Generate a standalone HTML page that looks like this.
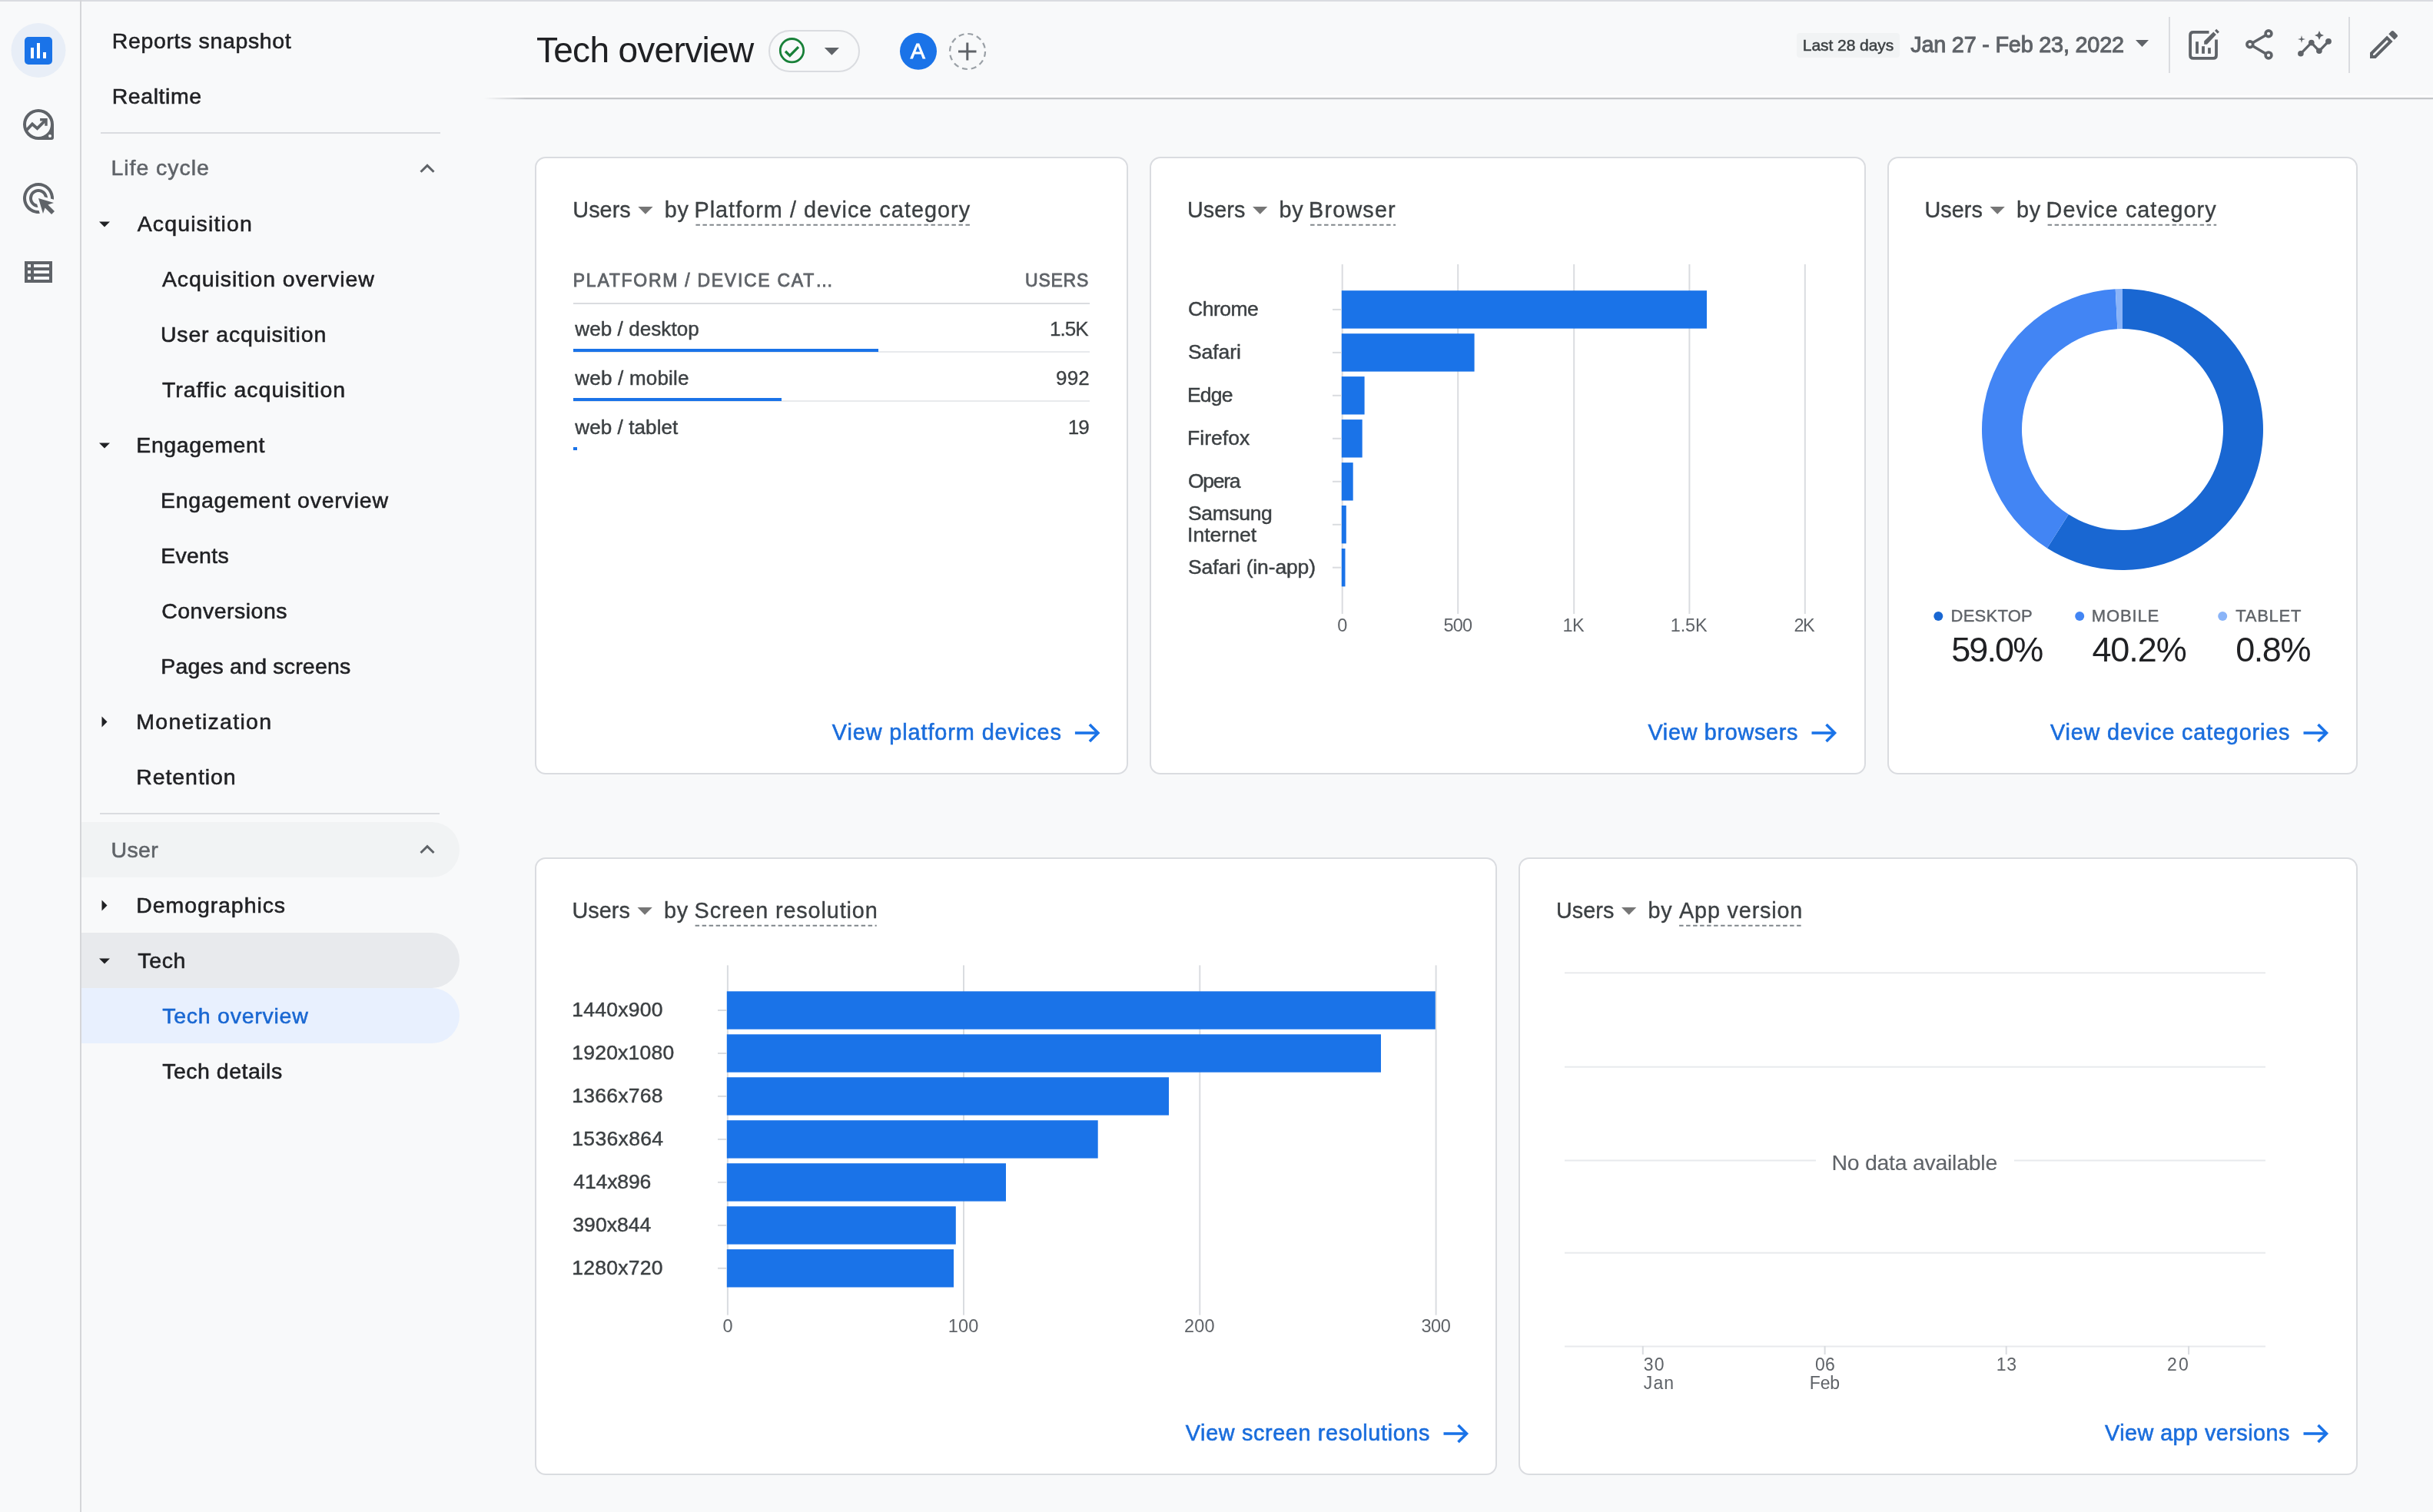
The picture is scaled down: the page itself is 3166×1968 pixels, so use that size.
<!DOCTYPE html>
<html><head><meta charset="utf-8"><style>
html,body{margin:0;padding:0;}
body{width:3166px;height:1968px;background:#f8f9fa;position:relative;overflow:hidden;font-family:"Liberation Sans", sans-serif;}
.t{position:absolute;white-space:nowrap;}
.tl{position:absolute;left:0;top:0;width:3166px;height:1968px;will-change:transform;}
svg.ov{position:absolute;left:0;top:0;}
</style></head><body>
<div style="position:absolute;left:0px;top:0px;width:3166px;height:2px;background:#dadce0"></div>
<div style="position:absolute;left:104px;top:0px;width:2px;height:1968px;background:#d5d6d9"></div>
<div style="position:absolute;left:630px;top:124px;width:2536px;height:3px;background:linear-gradient(90deg, rgba(255,255,255,0) 0px, rgba(255,255,255,1) 55px)"></div>
<div style="position:absolute;left:630px;top:127px;width:2536px;height:2px;background:linear-gradient(90deg, rgba(196,198,201,0) 0px, rgba(196,198,201,1) 55px)"></div>
<div style="position:absolute;left:630px;top:129px;width:2536px;height:1px;background:linear-gradient(90deg, rgba(232,234,237,0) 0px, rgba(232,234,237,1) 55px)"></div>
<div style="position:absolute;left:106px;top:1070px;width:492px;height:72px;background:#f1f3f4;border-radius:0 36px 36px 0"></div>
<div style="position:absolute;left:106px;top:1214px;width:492px;height:72px;background:#e8eaed;border-radius:0 36px 36px 0"></div>
<div style="position:absolute;left:106px;top:1286px;width:492px;height:72px;background:#e8f0fe;border-radius:0 36px 36px 0"></div>
<div style="position:absolute;left:131px;top:172px;width:442px;height:2px;background:#dadce0"></div>
<div style="position:absolute;left:130px;top:1058px;width:442px;height:2px;background:#dadce0"></div>
<div style="position:absolute;left:1000px;top:39px;width:118.5px;height:54.5px;border:2px solid #dadce0;border-radius:28px;box-sizing:border-box"></div>
<div style="position:absolute;left:2338px;top:43.4px;width:134px;height:32px;background:#f1f3f4;border-radius:4px"></div>
<div style="position:absolute;left:2822px;top:22px;width:2px;height:73px;background:#dadce0"></div>
<div style="position:absolute;left:3056px;top:22px;width:2px;height:73px;background:#dadce0"></div>
<div style="position:absolute;left:696px;top:204px;width:772px;height:804px;background:#fff;border:2px solid #dadce0;border-radius:14px;box-sizing:border-box"></div>
<div style="position:absolute;left:1496px;top:204px;width:932px;height:804px;background:#fff;border:2px solid #dadce0;border-radius:14px;box-sizing:border-box"></div>
<div style="position:absolute;left:2456px;top:204px;width:612px;height:804px;background:#fff;border:2px solid #dadce0;border-radius:14px;box-sizing:border-box"></div>
<div style="position:absolute;left:696px;top:1116px;width:1252px;height:804px;background:#fff;border:2px solid #dadce0;border-radius:14px;box-sizing:border-box"></div>
<div style="position:absolute;left:1976px;top:1116px;width:1092px;height:804px;background:#fff;border:2px solid #dadce0;border-radius:14px;box-sizing:border-box"></div>
<svg class="ov" width="3166" height="1968" viewBox="0 0 3166 1968">
<circle cx="50" cy="65.5" r="35.5" fill="#e8eef7"/>
<rect x="32" y="48" width="36" height="36" fill="#1a73e8" rx="5"/>
<rect x="40" y="62" width="4" height="14" fill="#fff"/>
<rect x="48" y="56" width="4" height="20" fill="#fff"/>
<rect x="56" y="68" width="4" height="8" fill="#fff"/>
<path fill="#5f6368" fill-rule="evenodd" d="M50 142 A20 20 0 0 0 30 162 A20 20 0 0 0 50 182 H67 Q70 182 70 179 V162 A20 20 0 0 0 50 142 Z M50 146 A16 16 0 1 1 50 178 A16 16 0 1 1 50 146 Z"/>
<circle cx="65" cy="177" r="2" fill="#f8f9fa"/>
<g fill="none" stroke="#5f6368" stroke-width="3.8" stroke-linejoin="miter" stroke-miterlimit="10"><polyline points="33.5,170.5 42,161.5 48.5,167.2 59.5,156.2"/></g>
<path d="M52.1 155.8 H60 V163.7" fill="none" stroke="#5f6368" stroke-width="3.4" stroke-linejoin="miter"/>
<g transform="translate(26,234) scale(2)" fill="#5f6368"><path d="M11.71,17.99C8.53,17.84,6,15.22,6,12c0-3.31,2.690-6,6-6c3.22,0,5.84,2.53,5.99,5.71l-2.1-0.63C15.48,9.31,13.89,8,12,8 c-2.21,0-4,1.79-4,4c0,1.89,1.31,3.48,3.08,3.89L11.71,17.99z M22,12c0,0.3-0.01,0.6-0.04,0.9l-1.97-0.59C20,12.21,20,12.1,20,12 c0-4.42-3.58-8-8-8s-8,3.58-8,8s3.58,8,8,8c0.1,0,0.21,0,0.31-0.01l0.59,1.97C12.6,21.990,12.3,22,12,22C6.48,22,2,17.52,2,12 C2,6.48,6.48,2,12,2S22,6.48,22,12z M18.23,16.26L22,15l-10-3l3,10l1.26-3.77l4.27,4.27l1.97-1.97L18.23,16.26z"/></g>
<path fill="#5f6368" fill-rule="evenodd" d="M32 340 H68 V368 H32 Z M36 344 h4 v4 h-4 Z M44 344 h20 v4 h-20 Z M36 352 h4 v4 h-4 Z M44 352 h20 v4 h-20 Z M36 360 h4 v4 h-4 Z M44 360 h20 v4 h-20 Z"/>
<path d="M129 288.5 H143 L136 295.5 Z" fill="#202124"/>
<path d="M129 576.5 H143 L136 583.5 Z" fill="#202124"/>
<path d="M129 1247.5 H143 L136 1254.5 Z" fill="#202124"/>
<path d="M132.5 932.5 V946.5 L139.5 939.5 Z" fill="#202124"/>
<path d="M132.5 1171.5 V1185.5 L139.5 1178.5 Z" fill="#202124"/>
<path d="M547.5 223.8 L556 215.4 L564.5 223.8" fill="none" stroke="#5f6368" stroke-width="3"/>
<path d="M547.5 1110.0 L556 1101.6 L564.5 1110.0" fill="none" stroke="#5f6368" stroke-width="3"/>
<circle cx="1030.5" cy="65.7" r="15.2" fill="none" stroke="#188038" stroke-width="2.8"/>
<polyline points="1022,66.8 1027.8,72.4 1039,61.2" fill="none" stroke="#188038" stroke-width="3.3"/>
<path d="M1072.8 61.9 H1092 L1082.4 71.8 Z" fill="#5f6368"/>
<circle cx="1195" cy="66.8" r="24" fill="#1a73e8"/>
<circle cx="1259" cy="67" r="23" fill="none" stroke="#9aa0a6" stroke-width="2.2" stroke-dasharray="7 5"/>
<path d="M1247 67 H1270.5 M1258.8 55.5 V78.5" stroke="#5f6368" stroke-width="3"/>
<path d="M2779 52.1 H2796 L2787.5 61 Z" fill="#5f6368"/>
<path d="M2874.5 41.9 H2854 Q2850.1 41.9 2850.1 45.8 V71.9 Q2850.1 75.8 2854 75.8 H2880.1 Q2884 75.8 2884 71.9 V51.5" fill="none" stroke="#5f6368" stroke-width="3.8"/>
<rect x="2857.1" y="54.2" width="3.8" height="15.6" fill="#5f6368"/>
<rect x="2865.1" y="60.2" width="3.8" height="9.6" fill="#5f6368"/>
<rect x="2873.1" y="62.2" width="3.7" height="7.6" fill="#5f6368"/>
<path d="M2868.2 53.4 L2880.3 41.5 L2883.9 45.0 L2871.9 57.7 H2868.2 Z" fill="#5f6368"/>
<path d="M2882.0 40.0 L2884.2 37.8 L2887.9 41.5 L2885.7 43.7 Z" fill="#5f6368"/>
<g stroke="#5f6368" stroke-width="3.5"><line x1="2927.8" y1="57.8" x2="2952" y2="43.8"/><line x1="2927.8" y1="57.8" x2="2952" y2="71.9"/></g>
<g fill="#f8f9fa" stroke="#5f6368" stroke-width="3.65"><circle cx="2927.8" cy="57.8" r="3.9"/><circle cx="2952" cy="43.8" r="3.9"/><circle cx="2952" cy="71.9" r="3.9"/></g>
<g stroke="#5f6368" stroke-width="3.3" fill="none"><polyline points="2993.9,69.8 3007.8,55.6 3017.9,66.3 3030,53.8"/></g><g fill="#5f6368"><circle cx="2993.9" cy="69.8" r="3.8"/><circle cx="3007.8" cy="55.6" r="3.8"/><circle cx="3017.9" cy="66.3" r="3.8"/><circle cx="3030" cy="53.8" r="3.9"/></g>
<g transform="translate(2988,34) scale(2)" fill="#5f6368"><path d="M15 9l.94-2.07L18 6l-2.06-.93L15 3l-.92 2.07L12 6l2.08.93z"/><path d="M3.5 11L4 9l2-.5L4 8l-.5-2L3 8l-2 .5L3 9z"/></g>
<g transform="translate(3078,34) scale(2)" fill="#5f6368"><path d="M3 17.25V21h3.75L17.81 9.94l-3.75-3.75L3 17.25zM5.92 19H5v-.92l9.06-9.06.92.92L5.920 19zM20.71 5.63l-2.34-2.34c-.2-.2-.45-.29-.71-.29s-.51.1-.7.29l-1.83 1.83 3.75 3.75 1.83-1.83c.39-.39.39-1.02 0-1.41z"/></g>
<path d="M830.3 269.0 H849.6 L839.9 278.8 Z" fill="#767676"/>
<line x1="905.4" y1="292.8" x2="1262.7" y2="292.8" stroke="#80868b" stroke-width="2" stroke-dasharray="5.5 3.5"/>
<rect x="746" y="394" width="672" height="2" fill="#dadce0"/>
<rect x="746" y="457" width="672" height="2" fill="#e8eaed"/>
<rect x="746" y="454" width="397" height="4" fill="#1a73e8"/>
<rect x="746" y="521" width="672" height="2" fill="#e8eaed"/>
<rect x="746" y="518" width="271" height="4" fill="#1a73e8"/>
<rect x="746" y="582" width="5" height="4" fill="#1a73e8"/>
<g fill="none" stroke="#1a73e8" stroke-width="3.6"><path d="M1398.9 954 H1428.9"/><path d="M1417.9 943 L1428.9 954 L1417.9 965"/></g>
<path d="M1630.0 269.0 H1649.3 L1639.7 278.8 Z" fill="#767676"/>
<line x1="1705.1" y1="292.8" x2="1816.1" y2="292.8" stroke="#80868b" stroke-width="2" stroke-dasharray="5.5 3.5"/>
<rect x="1745.7" y="344" width="2" height="455" fill="#dadce0"/>
<rect x="1896.2" y="344" width="2" height="455" fill="#dadce0"/>
<rect x="2047.2" y="344" width="2" height="455" fill="#dadce0"/>
<rect x="2197.4" y="344" width="2" height="455" fill="#dadce0"/>
<rect x="2347.8" y="344" width="2" height="455" fill="#dadce0"/>
<rect x="1745.8" y="378.2" width="475.2" height="49.4" fill="#1a73e8"/>
<rect x="1734" y="401.9" width="12" height="2" fill="#dadce0"/>
<rect x="1745.8" y="434.2" width="172.8" height="49.4" fill="#1a73e8"/>
<rect x="1734" y="457.9" width="12" height="2" fill="#dadce0"/>
<rect x="1745.8" y="490.1" width="29.8" height="49.4" fill="#1a73e8"/>
<rect x="1734" y="513.8" width="12" height="2" fill="#dadce0"/>
<rect x="1745.8" y="546.1" width="26.9" height="49.4" fill="#1a73e8"/>
<rect x="1734" y="569.8" width="12" height="2" fill="#dadce0"/>
<rect x="1745.8" y="602.1" width="14.9" height="49.4" fill="#1a73e8"/>
<rect x="1734" y="625.8" width="12" height="2" fill="#dadce0"/>
<rect x="1745.8" y="658.0" width="6.0" height="49.4" fill="#1a73e8"/>
<rect x="1734" y="681.8" width="12" height="2" fill="#dadce0"/>
<rect x="1745.8" y="714.0" width="4.7" height="49.4" fill="#1a73e8"/>
<rect x="1734" y="737.7" width="12" height="2" fill="#dadce0"/>
<g fill="none" stroke="#1a73e8" stroke-width="3.6"><path d="M2357.5 954 H2387.5"/><path d="M2376.5 943 L2387.5 954 L2376.5 965"/></g>
<path d="M2589.5 269.0 H2608.8 L2599.2 278.8 Z" fill="#767676"/>
<line x1="2664.6" y1="292.8" x2="2884.2" y2="292.8" stroke="#80868b" stroke-width="2" stroke-dasharray="5.5 3.5"/>
<path d="M2762.00 376.00 A183 183 0 1 1 2663.94 713.51 L2691.81 669.61 A131 131 0 1 0 2762.00 428.00 Z" fill="#1967d2"/>
<path d="M2663.94 713.51 A183 183 0 0 1 2752.74 376.23 L2755.37 428.17 A131 131 0 0 0 2691.81 669.61 Z" fill="#4285f4"/>
<path d="M2752.74 376.23 A183 183 0 0 1 2762.00 376.00 L2762.00 428.00 A131 131 0 0 0 2755.37 428.17 Z" fill="#8ab4f8"/>
<circle cx="2522.3" cy="802.1" r="6" fill="#1967d2"/>
<circle cx="2706.2" cy="802.1" r="6" fill="#4285f4"/>
<circle cx="2892.2" cy="802.1" r="6" fill="#8ab4f8"/>
<g fill="none" stroke="#1a73e8" stroke-width="3.6"><path d="M2997.5 954 H3027.5"/><path d="M3016.5 943 L3027.5 954 L3016.5 965"/></g>
<path d="M829.5 1181.0 H848.8 L839.1 1190.8 Z" fill="#767676"/>
<line x1="904.6" y1="1204.8" x2="1140.7" y2="1204.8" stroke="#80868b" stroke-width="2" stroke-dasharray="5.5 3.5"/>
<rect x="945.9" y="1256.4" width="2" height="455.3" fill="#dadce0"/>
<rect x="1253.0" y="1256.4" width="2" height="455.3" fill="#dadce0"/>
<rect x="1560.3" y="1256.4" width="2" height="455.3" fill="#dadce0"/>
<rect x="1867.6" y="1256.4" width="2" height="455.3" fill="#dadce0"/>
<rect x="945.8" y="1290.3" width="922.0" height="49.4" fill="#1a73e8"/>
<rect x="934" y="1314.0" width="12" height="2" fill="#dadce0"/>
<rect x="945.8" y="1346.3" width="851.2" height="49.4" fill="#1a73e8"/>
<rect x="934" y="1370.0" width="12" height="2" fill="#dadce0"/>
<rect x="945.8" y="1402.2" width="575.2" height="49.4" fill="#1a73e8"/>
<rect x="934" y="1425.9" width="12" height="2" fill="#dadce0"/>
<rect x="945.8" y="1458.2" width="482.9" height="49.4" fill="#1a73e8"/>
<rect x="934" y="1481.9" width="12" height="2" fill="#dadce0"/>
<rect x="945.8" y="1514.2" width="363.2" height="49.4" fill="#1a73e8"/>
<rect x="934" y="1537.9" width="12" height="2" fill="#dadce0"/>
<rect x="945.8" y="1570.2" width="298.0" height="49.4" fill="#1a73e8"/>
<rect x="934" y="1593.9" width="12" height="2" fill="#dadce0"/>
<rect x="945.8" y="1626.1" width="295.2" height="49.4" fill="#1a73e8"/>
<rect x="934" y="1649.8" width="12" height="2" fill="#dadce0"/>
<g fill="none" stroke="#1a73e8" stroke-width="3.6"><path d="M1878.5 1866 H1908.5"/><path d="M1897.5 1855 L1908.5 1866 L1897.5 1877"/></g>
<path d="M2110.0 1181.0 H2129.3 L2119.7 1190.8 Z" fill="#767676"/>
<line x1="2185.1" y1="1204.8" x2="2344.3" y2="1204.8" stroke="#80868b" stroke-width="2" stroke-dasharray="5.5 3.5"/>
<rect x="2036" y="1265.3" width="912" height="2" fill="#e8eaed"/>
<rect x="2036" y="1387.7" width="912" height="2" fill="#e8eaed"/>
<rect x="2036" y="1509.5" width="912" height="2" fill="#e8eaed"/>
<rect x="2036" y="1629.7" width="912" height="2" fill="#e8eaed"/>
<rect x="2036" y="1751.5" width="912" height="2" fill="#e8eaed"/>
<rect x="2363" y="1490" width="258" height="40" fill="#fff"/>
<rect x="2136.8" y="1752" width="2" height="11" fill="#dadce0"/>
<rect x="2373.6" y="1752" width="2" height="11" fill="#dadce0"/>
<rect x="2609.7" y="1752" width="2" height="11" fill="#dadce0"/>
<rect x="2847.1" y="1752" width="2" height="11" fill="#dadce0"/>
<g fill="none" stroke="#1a73e8" stroke-width="3.6"><path d="M2997.5 1866 H3027.5"/><path d="M3016.5 1855 L3027.5 1866 L3016.5 1877"/></g>
</svg>
<div class="tl">
<div class="t" style="left:145.70px;top:31.50px;font-size:28.5px;line-height:43px;color:#202124;letter-spacing:0.643px;-webkit-text-stroke:0.55px #202124;">Reports snapshot</div>
<div class="t" style="left:145.70px;top:103.90px;font-size:28.5px;line-height:43px;color:#202124;letter-spacing:0.571px;-webkit-text-stroke:0.55px #202124;">Realtime</div>
<div class="t" style="left:144.50px;top:197.00px;font-size:28.5px;line-height:43px;color:#5f6368;letter-spacing:0.939px;-webkit-text-stroke:0.55px #5f6368;">Life cycle</div>
<div class="t" style="left:178.70px;top:269.50px;font-size:28.5px;line-height:43px;color:#202124;letter-spacing:1.123px;-webkit-text-stroke:0.55px #202124;">Acquisition</div>
<div class="t" style="left:210.90px;top:341.50px;font-size:28.5px;line-height:43px;color:#202124;letter-spacing:0.936px;-webkit-text-stroke:0.55px #202124;">Acquisition overview</div>
<div class="t" style="left:208.90px;top:413.50px;font-size:28.5px;line-height:43px;color:#202124;letter-spacing:0.846px;-webkit-text-stroke:0.55px #202124;">User acquisition</div>
<div class="t" style="left:210.90px;top:485.50px;font-size:28.5px;line-height:43px;color:#202124;letter-spacing:1.004px;-webkit-text-stroke:0.55px #202124;">Traffic acquisition</div>
<div class="t" style="left:177.30px;top:557.50px;font-size:28.5px;line-height:43px;color:#202124;letter-spacing:0.600px;-webkit-text-stroke:0.55px #202124;">Engagement</div>
<div class="t" style="left:208.90px;top:629.50px;font-size:28.5px;line-height:43px;color:#202124;letter-spacing:0.783px;-webkit-text-stroke:0.55px #202124;">Engagement overview</div>
<div class="t" style="left:209.20px;top:701.50px;font-size:28.5px;line-height:43px;color:#202124;letter-spacing:0.264px;-webkit-text-stroke:0.55px #202124;">Events</div>
<div class="t" style="left:210.20px;top:773.50px;font-size:28.5px;line-height:43px;color:#202124;letter-spacing:0.494px;-webkit-text-stroke:0.55px #202124;">Conversions</div>
<div class="t" style="left:209.20px;top:845.50px;font-size:28.5px;line-height:43px;color:#202124;letter-spacing:0.191px;-webkit-text-stroke:0.55px #202124;">Pages and screens</div>
<div class="t" style="left:177.30px;top:917.50px;font-size:28.5px;line-height:43px;color:#202124;letter-spacing:1.287px;-webkit-text-stroke:0.55px #202124;">Monetization</div>
<div class="t" style="left:177.30px;top:989.50px;font-size:28.5px;line-height:43px;color:#202124;letter-spacing:0.906px;-webkit-text-stroke:0.55px #202124;">Retention</div>
<div class="t" style="left:144.50px;top:1084.50px;font-size:28.5px;line-height:43px;color:#5f6368;letter-spacing:0.373px;-webkit-text-stroke:0.55px #5f6368;">User</div>
<div class="t" style="left:177.30px;top:1156.50px;font-size:28.5px;line-height:43px;color:#202124;letter-spacing:0.909px;-webkit-text-stroke:0.55px #202124;">Demographics</div>
<div class="t" style="left:179.30px;top:1228.50px;font-size:28.5px;line-height:43px;color:#202124;letter-spacing:0.650px;-webkit-text-stroke:0.55px #202124;">Tech</div>
<div class="t" style="left:211.20px;top:1300.50px;font-size:28.5px;line-height:43px;color:#1967d2;letter-spacing:0.751px;-webkit-text-stroke:0.55px #1967d2;">Tech overview</div>
<div class="t" style="left:211.20px;top:1372.50px;font-size:28.5px;line-height:43px;color:#202124;letter-spacing:0.495px;-webkit-text-stroke:0.55px #202124;">Tech details</div>
<div class="t" style="left:697.90px;top:30.55px;font-size:46px;line-height:69px;color:#202124;letter-spacing:-0.686px;">Tech overview</div>
<div class="t" style="left:1184.70px;top:44.50px;font-size:28.5px;line-height:43px;color:#fff;-webkit-text-stroke:0.9px #fff;">A</div>
<div class="t" style="left:2345.80px;top:42.90px;font-size:21px;line-height:32px;color:#3c4043;letter-spacing:-0.053px;-webkit-text-stroke:0.5px #3c4043;">Last 28 days</div>
<div class="t" style="left:2486.20px;top:36.50px;font-size:28.8px;line-height:43px;color:#5f6368;letter-spacing:-0.198px;-webkit-text-stroke:1.0px #5f6368;">Jan 27 - Feb 23, 2022</div>
<div class="t" style="left:745.30px;top:251.50px;font-size:28.8px;line-height:43px;color:#3c4043;letter-spacing:0.050px;-webkit-text-stroke:0.35px #3c4043;">Users</div>
<div class="t" style="left:864.80px;top:251.50px;font-size:28.8px;line-height:43px;color:#3c4043;letter-spacing:0.685px;-webkit-text-stroke:0.35px #3c4043;">by</div>
<div class="t" style="left:903.40px;top:251.50px;font-size:28.8px;line-height:43px;color:#3c4043;letter-spacing:1.032px;-webkit-text-stroke:0.35px #3c4043;">Platform / device category</div>
<div class="t" style="left:745.80px;top:347.60px;font-size:23px;line-height:34px;color:#5f6368;letter-spacing:1.723px;-webkit-text-stroke:0.8px #5f6368;">PLATFORM / DEVICE CAT…</div>
<div class="t" style="left:1334.00px;top:347.60px;font-size:23px;line-height:34px;color:#5f6368;letter-spacing:0.775px;-webkit-text-stroke:0.8px #5f6368;">USERS</div>
<div class="t" style="left:748.30px;top:408.50px;font-size:26px;line-height:39px;color:#3c4043;letter-spacing:0.086px;-webkit-text-stroke:0.45px #3c4043;">web / desktop</div>
<div class="t" style="left:1366.00px;top:408.50px;font-size:26px;line-height:39px;color:#3c4043;letter-spacing:-0.948px;-webkit-text-stroke:0.3px #3c4043;">1.5K</div>
<div class="t" style="left:748.30px;top:472.50px;font-size:26px;line-height:39px;color:#3c4043;letter-spacing:0.209px;-webkit-text-stroke:0.45px #3c4043;">web / mobile</div>
<div class="t" style="left:1374.00px;top:472.50px;font-size:26px;line-height:39px;color:#3c4043;letter-spacing:0.190px;-webkit-text-stroke:0.3px #3c4043;">992</div>
<div class="t" style="left:748.30px;top:536.50px;font-size:26px;line-height:39px;color:#3c4043;letter-spacing:0.096px;-webkit-text-stroke:0.45px #3c4043;">web / tablet</div>
<div class="t" style="left:1389.70px;top:536.50px;font-size:26px;line-height:39px;color:#3c4043;letter-spacing:-0.860px;-webkit-text-stroke:0.3px #3c4043;">19</div>
<div class="t" style="left:1082.80px;top:931.50px;font-size:28.8px;line-height:43px;color:#1a6ddc;letter-spacing:0.922px;-webkit-text-stroke:0.6px #1a6ddc;">View platform devices</div>
<div class="t" style="left:1545.00px;top:251.50px;font-size:28.8px;line-height:43px;color:#3c4043;letter-spacing:0.050px;-webkit-text-stroke:0.35px #3c4043;">Users</div>
<div class="t" style="left:1664.50px;top:251.50px;font-size:28.8px;line-height:43px;color:#3c4043;letter-spacing:0.685px;-webkit-text-stroke:0.35px #3c4043;">by</div>
<div class="t" style="left:1703.10px;top:251.50px;font-size:28.8px;line-height:43px;color:#3c4043;letter-spacing:1.163px;-webkit-text-stroke:0.35px #3c4043;">Browser</div>
<div class="t" style="left:1740.20px;top:797.10px;font-size:23.5px;line-height:35px;color:#5f6368;">0</div>
<div class="t" style="left:1878.45px;top:797.10px;font-size:23.5px;line-height:35px;color:#5f6368;letter-spacing:-0.820px;">500</div>
<div class="t" style="left:2033.40px;top:797.10px;font-size:23.5px;line-height:35px;color:#5f6368;letter-spacing:-0.470px;">1K</div>
<div class="t" style="left:2173.75px;top:797.10px;font-size:23.5px;line-height:35px;color:#5f6368;letter-spacing:-0.123px;">1.5K</div>
<div class="t" style="left:2334.60px;top:797.10px;font-size:23.5px;line-height:35px;color:#5f6368;letter-spacing:-1.670px;">2K</div>
<div class="t" style="left:1546.00px;top:381.90px;font-size:26.5px;line-height:40px;color:#3c4043;letter-spacing:-0.483px;-webkit-text-stroke:0.45px #3c4043;">Chrome</div>
<div class="t" style="left:1546.00px;top:437.87px;font-size:26.5px;line-height:40px;color:#3c4043;letter-spacing:-0.068px;-webkit-text-stroke:0.45px #3c4043;">Safari</div>
<div class="t" style="left:1545.00px;top:493.84px;font-size:26.5px;line-height:40px;color:#3c4043;letter-spacing:-0.817px;-webkit-text-stroke:0.45px #3c4043;">Edge</div>
<div class="t" style="left:1545.00px;top:549.81px;font-size:26.5px;line-height:40px;color:#3c4043;letter-spacing:0.027px;-webkit-text-stroke:0.45px #3c4043;">Firefox</div>
<div class="t" style="left:1546.00px;top:605.78px;font-size:26.5px;line-height:40px;color:#3c4043;letter-spacing:-1.278px;-webkit-text-stroke:0.45px #3c4043;">Opera</div>
<div class="t" style="left:1546.00px;top:648.45px;font-size:26.5px;line-height:40px;color:#3c4043;letter-spacing:-0.369px;-webkit-text-stroke:0.45px #3c4043;">Samsung</div>
<div class="t" style="left:1545.00px;top:676.45px;font-size:26.5px;line-height:40px;color:#3c4043;letter-spacing:0.028px;-webkit-text-stroke:0.45px #3c4043;">Internet</div>
<div class="t" style="left:1546.00px;top:717.72px;font-size:26.5px;line-height:40px;color:#3c4043;letter-spacing:-0.134px;-webkit-text-stroke:0.45px #3c4043;">Safari (in-app)</div>
<div class="t" style="left:2144.50px;top:931.50px;font-size:28.8px;line-height:43px;color:#1a6ddc;letter-spacing:0.682px;-webkit-text-stroke:0.6px #1a6ddc;">View browsers</div>
<div class="t" style="left:2504.50px;top:251.50px;font-size:28.8px;line-height:43px;color:#3c4043;letter-spacing:0.050px;-webkit-text-stroke:0.35px #3c4043;">Users</div>
<div class="t" style="left:2624.00px;top:251.50px;font-size:28.8px;line-height:43px;color:#3c4043;letter-spacing:0.685px;-webkit-text-stroke:0.35px #3c4043;">by</div>
<div class="t" style="left:2662.60px;top:251.50px;font-size:28.8px;line-height:43px;color:#3c4043;letter-spacing:1.038px;-webkit-text-stroke:0.35px #3c4043;">Device category</div>
<div class="t" style="left:2538.60px;top:784.80px;font-size:22px;line-height:33px;color:#5f6368;letter-spacing:0.223px;-webkit-text-stroke:0.4px #5f6368;">DESKTOP</div>
<div class="t" style="left:2539.20px;top:812.10px;font-size:45px;line-height:68px;color:#202124;letter-spacing:-1.896px;">59.0%</div>
<div class="t" style="left:2721.70px;top:784.80px;font-size:22px;line-height:33px;color:#5f6368;letter-spacing:0.888px;-webkit-text-stroke:0.4px #5f6368;">MOBILE</div>
<div class="t" style="left:2722.40px;top:812.10px;font-size:45px;line-height:68px;color:#202124;letter-spacing:-1.071px;">40.2%</div>
<div class="t" style="left:2909.20px;top:784.80px;font-size:22px;line-height:33px;color:#5f6368;letter-spacing:0.747px;-webkit-text-stroke:0.4px #5f6368;">TABLET</div>
<div class="t" style="left:2909.30px;top:812.10px;font-size:45px;line-height:68px;color:#202124;letter-spacing:-1.485px;">0.8%</div>
<div class="t" style="left:2668.00px;top:931.50px;font-size:28.8px;line-height:43px;color:#1a6ddc;letter-spacing:0.828px;-webkit-text-stroke:0.6px #1a6ddc;">View device categories</div>
<div class="t" style="left:744.50px;top:1163.50px;font-size:28.8px;line-height:43px;color:#3c4043;letter-spacing:0.050px;-webkit-text-stroke:0.35px #3c4043;">Users</div>
<div class="t" style="left:864.00px;top:1163.50px;font-size:28.8px;line-height:43px;color:#3c4043;letter-spacing:0.685px;-webkit-text-stroke:0.35px #3c4043;">by</div>
<div class="t" style="left:903.60px;top:1163.50px;font-size:28.8px;line-height:43px;color:#3c4043;letter-spacing:0.876px;-webkit-text-stroke:0.35px #3c4043;">Screen resolution</div>
<div class="t" style="left:940.40px;top:1709.10px;font-size:23.5px;line-height:35px;color:#5f6368;">0</div>
<div class="t" style="left:1233.80px;top:1709.10px;font-size:23.5px;line-height:35px;color:#5f6368;letter-spacing:0.130px;">100</div>
<div class="t" style="left:1541.10px;top:1709.10px;font-size:23.5px;line-height:35px;color:#5f6368;letter-spacing:0.130px;">200</div>
<div class="t" style="left:1849.40px;top:1709.10px;font-size:23.5px;line-height:35px;color:#5f6368;letter-spacing:-0.370px;">300</div>
<div class="t" style="left:744.30px;top:1294.00px;font-size:26.5px;line-height:40px;color:#3c4043;letter-spacing:0.246px;-webkit-text-stroke:0.45px #3c4043;">1440x900</div>
<div class="t" style="left:744.30px;top:1349.97px;font-size:26.5px;line-height:40px;color:#3c4043;letter-spacing:0.210px;-webkit-text-stroke:0.45px #3c4043;">1920x1080</div>
<div class="t" style="left:744.30px;top:1405.94px;font-size:26.5px;line-height:40px;color:#3c4043;letter-spacing:0.246px;-webkit-text-stroke:0.45px #3c4043;">1366x768</div>
<div class="t" style="left:744.30px;top:1461.91px;font-size:26.5px;line-height:40px;color:#3c4043;letter-spacing:0.332px;-webkit-text-stroke:0.45px #3c4043;">1536x864</div>
<div class="t" style="left:746.30px;top:1517.88px;font-size:26.5px;line-height:40px;color:#3c4043;letter-spacing:-0.107px;-webkit-text-stroke:0.45px #3c4043;">414x896</div>
<div class="t" style="left:745.30px;top:1573.85px;font-size:26.5px;line-height:40px;color:#3c4043;letter-spacing:0.060px;-webkit-text-stroke:0.45px #3c4043;">390x844</div>
<div class="t" style="left:744.30px;top:1629.82px;font-size:26.5px;line-height:40px;color:#3c4043;letter-spacing:0.246px;-webkit-text-stroke:0.45px #3c4043;">1280x720</div>
<div class="t" style="left:1542.80px;top:1843.50px;font-size:28.8px;line-height:43px;color:#1a6ddc;letter-spacing:0.637px;-webkit-text-stroke:0.6px #1a6ddc;">View screen resolutions</div>
<div class="t" style="left:2025.00px;top:1163.50px;font-size:28.8px;line-height:43px;color:#3c4043;letter-spacing:0.050px;-webkit-text-stroke:0.35px #3c4043;">Users</div>
<div class="t" style="left:2144.50px;top:1163.50px;font-size:28.8px;line-height:43px;color:#3c4043;letter-spacing:0.685px;-webkit-text-stroke:0.35px #3c4043;">by</div>
<div class="t" style="left:2185.10px;top:1163.50px;font-size:28.8px;line-height:43px;color:#3c4043;letter-spacing:0.815px;-webkit-text-stroke:0.35px #3c4043;">App version</div>
<div class="t" style="left:2383.40px;top:1491.50px;font-size:28.5px;line-height:43px;color:#5f6368;letter-spacing:-0.274px;-webkit-text-stroke:0.1px #5f6368;">No data available</div>
<div class="t" style="left:2138.80px;top:1758.90px;font-size:23px;line-height:34px;color:#5f6368;letter-spacing:1.208px;">30</div>
<div class="t" style="left:2138.80px;top:1783.30px;font-size:23px;line-height:34px;color:#5f6368;letter-spacing:1.104px;">Jan</div>
<div class="t" style="left:2362.00px;top:1758.90px;font-size:23px;line-height:34px;color:#5f6368;letter-spacing:0.208px;">06</div>
<div class="t" style="left:2354.75px;top:1783.30px;font-size:23px;line-height:34px;color:#5f6368;letter-spacing:-0.170px;">Feb</div>
<div class="t" style="left:2597.65px;top:1758.90px;font-size:23px;line-height:34px;color:#5f6368;letter-spacing:0.908px;">13</div>
<div class="t" style="left:2820.10px;top:1758.90px;font-size:23px;line-height:34px;color:#5f6368;letter-spacing:2.208px;">20</div>
<div class="t" style="left:2739.00px;top:1843.50px;font-size:28.8px;line-height:43px;color:#1a6ddc;letter-spacing:0.452px;-webkit-text-stroke:0.6px #1a6ddc;">View app versions</div>
</div>
</body></html>
